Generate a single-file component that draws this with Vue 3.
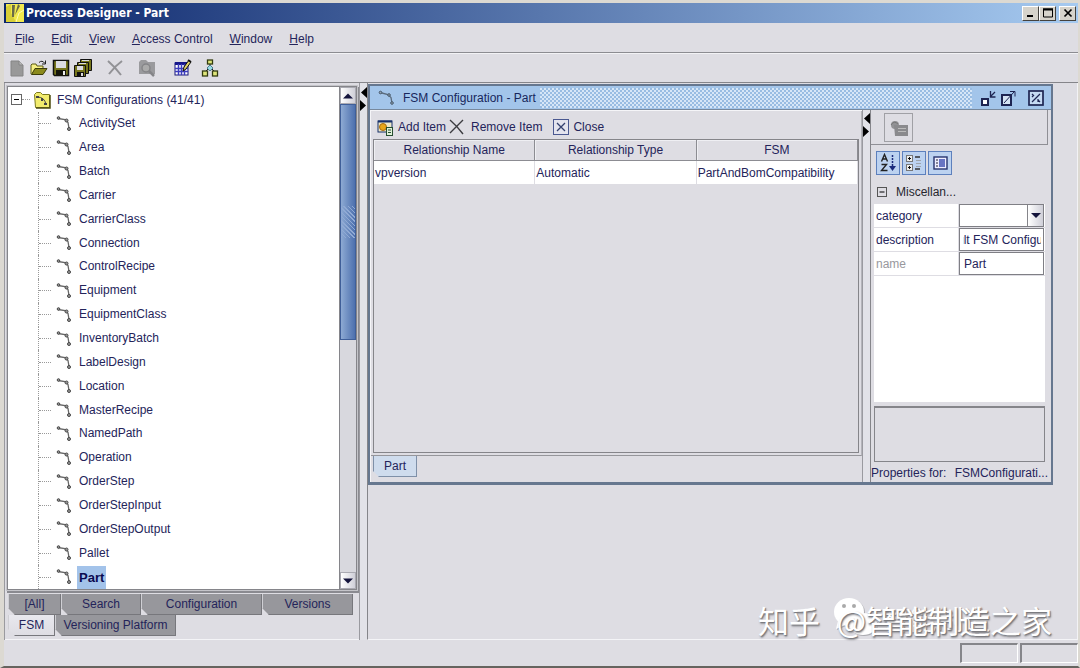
<script setup>
import { ref } from 'vue'

const menus = ['File', 'Edit', 'View', 'Access Control', 'Window', 'Help']
const items = [
  'ActivitySet', 'Area', 'Batch', 'Carrier', 'CarrierClass', 'Connection',
  'ControlRecipe', 'Equipment', 'EquipmentClass', 'InventoryBatch',
  'LabelDesign', 'Location', 'MasterRecipe', 'NamedPath', 'Operation',
  'OrderStep', 'OrderStepInput', 'OrderStepOutput', 'Pallet', 'Part',
]
const selected = ref('Part')
const category = ref('')
const description = ref('ult FSM Configuration')
const name = ref('Part')
</script>

<template>
  <div class="app">
    <header class="titlebar">
      <svg class="logo" width="18" height="18" viewBox="0 0 18 18">
        <rect width="18" height="18" fill="#f2e94e" />
        <path d="M0 18V3l5-3v9l5 9z" fill="#d8cf38" />
        <path d="M6 1h3l-1 12H6zM12 0l2 2-5 9z" fill="#6a6a48" />
        <path d="M10 18l3-9 5-3" stroke="#fffbb0" fill="none" />
      </svg>
      <h1>Process Designer - Part</h1>
      <div class="winbtns">
        <button aria-label="Minimize"><svg width="12" height="10"><path d="M2 8h6" stroke="#000" stroke-width="2" /></svg></button>
        <button aria-label="Maximize"><svg width="12" height="10"><path d="M1.500 1v8h9V1M1 1h10" stroke="#000" fill="none" /><path d="M1 1.500h10" stroke="#000" stroke-width="2" /></svg></button>
        <button class="x" aria-label="Close window"><svg width="12" height="10"><path d="M2.500 1.500l7 7M9.500 1.500l-7 7" stroke="#000" stroke-width="1.700" /></svg></button>
      </div>
    </header>

    <nav class="menubar">
      <button v-for="m in menus" :key="m"><u>{{ m[0] }}</u>{{ m.slice(1) }}</button>
    </nav>

    <div class="toolbar">
      <button aria-label="New"><svg width="18" height="18"><path d="M3 2h8l4 4v11H3z" fill="#999" stroke="#858585" /><path d="M11 2v4h4" fill="#bbb" stroke="#858585" /></svg></button>
      <button aria-label="Open">
        <svg width="18" height="18"><path d="M1 15V6l1-1h4l1 2h6v3" fill="#f5ef83" stroke="#5a5a14" /><path d="M1.500 15.500L5 9.500h12l-4 6z" fill="#8b8a1c" stroke="#3c3c08" /><path d="M9 3.500q3-3 6 1M12 5h3.500V1.500" fill="none" stroke="#222" /></svg>
      </button>
      <button aria-label="Save">
        <svg width="18" height="18"><path d="M1.500 1.500h15v15h-14l-1-1z" fill="#77761c" stroke="#111" stroke-width="1.500" /><rect x="4" y="2" width="10" height="7" fill="#dcdce2" /><rect x="4" y="11" width="10" height="6" fill="#15150a" /><rect x="11" y="12" width="2" height="4" fill="#eee" /></svg>
      </button>
      <button aria-label="Save all">
        <svg width="18" height="18"><g stroke="#111" fill="#77761c"><path d="M6.500.5h11v11h-11z" /><path d="M3.500 3.500h11v11h-11z" /><path d="M.5 6.500h11v11H.5z" /></g><path d="M8 1h7v1H8zM5 4h7v1H5zM3 7h6v4H3z" fill="#dcdce2" /><path d="M3 13h7v4H3z" fill="#111" /><path d="M7 14h2v3H7z" fill="#ddd" /></svg>
      </button>
      <button class="gap-a" aria-label="Delete"><svg width="18" height="18"><path d="M2 2q7 6 13 14M16 2Q9 7 3 15" stroke="#929296" stroke-width="2" fill="none" /></svg></button>
      <button class="gap-b" aria-label="Find">
        <svg width="18" height="18"><path d="M1 3l2-2h5l2 2h7v12H1z" fill="#9a9a9d" /><circle cx="8" cy="9" r="4" fill="#aaa" stroke="#858588" stroke-width="1.500" /><path d="M11 12l5 5" stroke="#858588" stroke-width="2.500" /></svg>
      </button>
      <button class="gap-c" aria-label="Edit table">
        <svg width="18" height="18"><rect x="1" y="4" width="13" height="12" fill="#fff" stroke="#16167a" /><rect x="1" y="3" width="13" height="3" fill="#16168a" /><path d="M1 9.500h13M1 12.500h13M4.500 5v11M7.500 5v11M10.500 5v11" stroke="#3b3bbd" stroke-width="1.500" /><path d="M9 12l1-4 5-7 2 2-5 7z" fill="#e3d36a" stroke="#111" /><path d="M14 1l3 2" stroke="#111" stroke-width="2" /></svg>
      </button>
      <button class="gap-d" aria-label="Hierarchy">
        <svg width="18" height="18"><path d="M9 5v3M9 8l-5 5M9 8l5 5" stroke="#222" /><g fill="#dfe57a" stroke="#333c10" stroke-width="1.300"><rect x="6.500" y="1" width="5" height="4" /><rect x="1.500" y="12" width="5" height="5" /><rect x="11.500" y="12" width="5" height="5" /></g><path d="M9 6l3 3-3 3-3-3z" fill="#9adbe5" stroke="#4d7f90" /></svg>
      </button>
    </div>

    <main class="main">
      <aside class="side">
        <div class="treebox">
          <ul class="tree">
            <li class="root">
              <svg class="exp" width="11" height="11"><rect x=".5" y=".5" width="10" height="10" fill="#fff" stroke="#666" /><path d="M3 5.500h5" stroke="#000" /></svg>
              <span class="dots"></span>
              <svg width="18" height="18"><path d="M1.500 3.500l2-2h4l2 2h7v13h-14z" fill="#f2ec6d" stroke="#7c7a1c" /><path d="M17 4v13H3" stroke="#4d4c10" fill="none" stroke-width="1.500" /><path d="M4 6q8 0 9 8" stroke="#444" fill="none" /><path d="M3 5h3v2H3zM8 7h2v3H8zM11 12h3v2h-3z" fill="#444" /></svg>
              <span class="label">FSM Configurations (41/41)</span>
            </li>
            <li v-for="i in items" :key="i" class="leaf" @click="selected = i">
              <span class="dots"></span>
              <svg width="16" height="16"><path d="M2 2.500l7 1 3 3 1 6" fill="none" stroke="#666" stroke-width="1.300" /><g fill="#999" stroke="#484848"><circle cx="2.500" cy="2" r="1.300" /><circle cx="10.500" cy="4.500" r="1.500" /><circle cx="13" cy="13" r="1.500" /></g></svg>
              <span class="label" :class="{ sel: selected === i }">{{ i }}</span>
            </li>
          </ul>
          <div class="scroll">
            <button aria-label="Scroll up"><svg width="10" height="6"><path d="M0 5.500L5 .5l5 5z" fill="#14143c" /></svg></button>
            <div class="thumb"><span></span></div>
            <div class="track"></div>
            <button aria-label="Scroll down"><svg width="10" height="6"><path d="M0 .5h10l-5 5z" fill="#14143c" /></svg></button>
          </div>
        </div>
        <div class="tabs">
          <div class="tabrow upper">
            <button class="t1">[All]</button><button class="t2">Search</button><button class="t3">Configuration</button><button class="t4">Versions</button>
          </div>
          <div class="tabrow lower">
            <button class="t5 on">FSM</button><button class="t6">Versioning Platform</button>
          </div>
        </div>
      </aside>

      <div class="divider">
        <svg width="7" height="24"><path d="M7 0v11L1 5.500zM0 13v11l6-5.500z" fill="#000" /></svg>
      </div>

      <section class="desktop">
        <article class="frame">
          <header class="ftitle">
            <svg width="17" height="16"><path d="M2 2.500l8 2 3 3 1 6" fill="none" stroke="#5b6b7c" stroke-width="1.300" /><g fill="#93a5b5" stroke="#46586a"><circle cx="2.500" cy="2.500" r="1.300" /><circle cx="11" cy="5" r="1.300" /><circle cx="14" cy="13" r="1.300" /></g></svg>
            <h2>FSM Configuration - Part</h2>
            <div class="bumps"></div>
            <button aria-label="Iconify"><svg width="16" height="16"><path d="M2 9h6v6H2z" fill="#fff" stroke="#1e2552" stroke-width="2" /><path d="M10 7l5-5M10.500 1v6h5" stroke="#1e2552" fill="none" stroke-width="1.300" /></svg></button>
            <button aria-label="Restore"><svg width="16" height="16"><path d="M2 5h9v10H2z" fill="#d5e3f3" stroke="#1e2552" stroke-width="2" /><path d="M4 13L14 2M10 1.500h5v5" stroke="#1e2552" fill="none" /></svg></button>
            <button class="fclose" aria-label="Close frame"><svg width="16" height="16"><rect x="1" y="1" width="14" height="14" fill="#c5daf2" stroke="#1e2552" stroke-width="1.700" /><path d="M4 4l2 2M10 10l2 2M12 4l-8 8M4 7l1-1M10 12v-3" stroke="#1e2552" stroke-width="1.200" /></svg></button>
          </header>
          <div class="fbody">
            <div class="left">
              <div class="inner">
                <div class="actions">
                  <button class="add"><svg width="17" height="17"><rect x="1" y="2" width="14" height="11" fill="#eee9c8" stroke="#17306b" /><path d="M1 2.500h14" stroke="#17306b" stroke-width="2" /><circle cx="6" cy="8" r="3.500" fill="#e6a61a" stroke="#a86b10" /><rect x="9.500" y="8.500" width="6" height="8" fill="#dff0d8" stroke="#254d30" /><path d="M11 11h3M11 13.500h3" stroke="#254d30" /></svg>Add Item</button>
                  <button class="rem"><svg width="16" height="16"><path d="M1 1q7 6 13 14M14 1Q8 7 1 14" stroke="#3c3c40" stroke-width="1.400" fill="none" /></svg>Remove Item</button>
                  <button class="clo"><svg width="16" height="16"><rect x=".5" y=".5" width="15" height="15" fill="#e4e4ee" stroke="#4a5890" /><path d="M4 4l8 8M12 4l-8 8" stroke="#34406f" stroke-width="1.300" /></svg>Close</button>
                </div>
                <div class="tablebox">
                  <table>
                    <thead><tr><th>Relationship Name</th><th>Relationship Type</th><th>FSM</th></tr></thead>
                    <tbody><tr><td>vpversion</td><td>Automatic</td><td>PartAndBomCompatibility</td></tr></tbody>
                  </table>
                </div>
              </div>
              <div class="ftabs"><button>Part</button></div>
            </div>
            <div class="divider two">
              <svg width="7" height="24"><path d="M7 0v11L1 5.500zM0 13v11l6-5.500z" fill="#000" /></svg>
            </div>
            <div class="props">
              <div class="ptop">
                <button aria-label="Properties"><svg width="20" height="18"><circle cx="6" cy="6" r="4" fill="#929295" /><path d="M5 6h14v11H6z" fill="#8a8a8d" /><path d="M9 9.500h8M9 12.500h8" stroke="#bbb" /><path d="M2 6q3-5 7-1" stroke="#777" fill="none" /></svg></button>
              </div>
              <div class="pbtns">
                <button aria-label="Sort A to Z"><svg width="20" height="20"><path d="M3.500 8.500l3-7 3 7M4.500 6h4M3.500 11.500h5l-5 6h6" stroke="#222" stroke-width="1.400" fill="none" /><path d="M14.500 2v12" stroke="#1c2c7c" stroke-width="1.500" stroke-dasharray="2 1" /><path d="M11 13h7l-3.500 5z" fill="#1c2c7c" /></svg></button>
                <button aria-label="Group"><svg width="20" height="20"><g fill="#eee" stroke="#777"><rect x="2.500" y="2.500" width="6" height="6" /><rect x="2.500" y="11.500" width="6" height="6" /></g><path d="M4 5.500h3M5.500 4v3M4 14.500h3M5.500 13v3" stroke="#111" /><path d="M11 4h5M11 16h5" stroke="#333" stroke-width="1.500" /><path d="M12 7.500h5M12 10.500h5M12 13.500h5" stroke="#9ca3ac" /></svg></button>
                <button aria-label="Details"><svg width="20" height="20"><rect x="4" y="4" width="13" height="12" fill="#eef" stroke="#27346e" stroke-width="1.400" /><path d="M6 7h2M6 10h2M6 13h2" stroke="#223" /><path d="M9 7h6M9 9h6M9 11h6M9 13h6" stroke="#3d4db0" stroke-width="1.500" /></svg></button>
              </div>
              <div class="misc">
                <svg width="10" height="10"><rect x=".5" y=".5" width="9" height="9" fill="none" stroke="#555" /><path d="M2.500 5h5" stroke="#000" /></svg>
                Miscellan...
              </div>
              <div class="plist">
                <div class="prow"><label for="cat">category</label><div class="selwrap"><select id="cat" v-model="category"><option value=""></option></select><span><svg width="10" height="5"><path d="M0 0h10L5 5z" fill="#14143c" /></svg></span></div></div>
                <div class="prow"><label for="desc">description</label><input id="desc" v-model="description" class="cut" /></div>
                <div class="prow"><label for="nm" class="dim">name</label><input id="nm" v-model="name" readonly /></div>
              </div>
              <div class="pdesc"></div>
              <footer class="pfoot"><span>Properties for:</span><span>FSMConfigurati...</span></footer>
            </div>
          </div>
        </article>
      </section>
    </main>

    <footer class="status"><span></span><span></span></footer>

    <div class="watermark">
      <span class="brand">知乎</span>
      <svg class="chat" width="46" height="42"><g fill="#fff"><ellipse cx="17" cy="16" rx="15" ry="14" /><path d="M6 25l-2 8 9-4z" /><ellipse cx="31" cy="28" rx="14" ry="11" /></g><g fill="#aaa"><circle cx="12" cy="10" r="2" /><circle cx="22" cy="10" r="2" /></g></svg>
      <span class="under">智能制造</span>
      <span class="over">@智能制造之家</span>
    </div>
  </div>
</template>

<style>
body { margin: 0; }
</style>

<style scoped>
* { box-sizing: border-box; }
.app {
  position: relative; display: flex; flex-direction: column; height: 100vh; min-height: 560px;
  background: #dedde3; border: solid #dcd9d2; border-width: 3px 2px 0 4px; border-bottom: 2px solid #66645f;
  font: 12px/16px "Liberation Sans", Arial, sans-serif; color: #24245a; overflow: hidden;
}
button { font: inherit; color: inherit; background: none; border: 0; padding: 0; margin: 0; white-space: nowrap; }
svg { display: block; flex: none; }
h1, h2, ul { margin: 0; padding: 0; font-size: 12px; }

.titlebar { display: flex; align-items: center; height: 20px; flex: none; padding: 0 2px; background: linear-gradient(90deg, #0a246a, #a6caf0); }
.titlebar h1 { margin-left: 2px; flex: 1; color: #fff; font: bold 12px/18px "DejaVu Sans Condensed", "DejaVu Sans", Tahoma, sans-serif; }
.winbtns { display: flex; }
.winbtns button { width: 17px; height: 15px; display: flex; align-items: center; justify-content: center; background: #d6d3cb; border: 1px solid; border-color: #fff #44423e #44423e #fff; }
.winbtns .x { margin-left: 3px; }

.menubar { display: flex; gap: 17px; height: 30px; flex: none; padding: 3px 11px 0; align-items: center; border-bottom: 1px solid #8c8c91; }
.toolbar { display: flex; align-items: center; gap: 4px; height: 30px; flex: none; padding: 0 4px; border-top: 1px solid #f2f2f5; border-bottom: 1px solid #85858a; }
.toolbar button { width: 18px; }
.gap-a { margin-left: 10px; }
.gap-b { margin-left: 10px; }
.gap-c { margin-left: 14px; }
.gap-d { margin-left: 5px; }

.main { flex: 1; display: flex; min-height: 0; }
.side { width: 355px; flex: none; display: flex; flex-direction: column; border-left: 1px solid #9a9a9f; }
.treebox { flex: 1; display: flex; min-height: 0; margin: 3px 2px 0 2px; border: 1px solid #85858a; box-shadow: 0 0 0 1px #c4c4c9, 1px 2px 0 1px #8a8a90; }
.tree { flex: 1; list-style: none; background: #fff; display: flex; flex-direction: column; min-height: 0; padding: 1px 0 0 3px; }
.tree li { flex: 1; display: flex; align-items: center; min-height: 0; }
.dots { width: 8px; border-top: 1px dotted #999; }
.root .dots { margin-right: 3px; }
.root .label { margin-left: 6px; }
.leaf { margin-left: 27px; border-left: 1px dotted #999; }
.leaf .dots { width: 12px; margin-right: 5px; }
.leaf .label { margin-left: 5px; padding: 0 2px; line-height: 23px; }
.label.sel { background: #a3c3ea; font-size: 13px; font-weight: bold; color: #0b0b50; }
.scroll { width: 17px; display: flex; flex-direction: column; border-left: 1px solid #85858a; background: #d8d8de; }
.scroll button { height: 17px; display: flex; align-items: center; justify-content: center; background: linear-gradient(90deg, #fff, #cfcfd8); border: 1px solid #aaaab2; flex: none; }
.thumb { flex: 235; display: flex; align-items: center; background: linear-gradient(90deg, #8daad3, #4d70ae); border: 1px solid #3f5f99; }
.thumb span { flex: 1; height: 32px; background: repeating-linear-gradient(45deg, #90aad4 0 1px, transparent 1px 3px); }
.track { flex: 234; }
.tabs { flex: none; height: 50px; padding: 4px 3px 0; border-bottom: 1px solid #f4f4f7; }
.tabrow { display: flex; height: 21px; }
.tabrow button { background: #97979c; border: solid #77777c; border-width: 0 1px 1px 0; border-left: 1px solid #cfcfd4; clip-path: polygon(0 0, 100% 0, 100% 100%, 7px 100%, 0 calc(100% - 7px)); }
.tabrow .on { background: linear-gradient(#e8e8ee, #dedde3); }
.t1 { width: 53px; }
.t2 { width: 80px; }
.t3 { width: 121px; }
.t4 { width: 91px; }
.t5 { width: 47px; }
.t6 { width: 121px; }

.divider { width: 8px; flex: none; padding: 4px 0 0 0; border-left: 1px solid #9a9aa0; background: #e2e2e8; }
.desktop { flex: 1; position: relative; border-left: 1px solid #85858a; border-bottom: 1px solid #f4f4f7; border-right: 1px solid #f2f2f5; }
.frame { position: absolute; left: 0; right: 24px; top: 1px; height: 401px; display: flex; flex-direction: column; border: 2px solid #66778f; border-bottom-width: 3px; background: #dedde3; }
.ftitle { height: 24px; flex: none; display: flex; align-items: center; padding: 0 7px 0 8px; background: #a3c5ea; border-bottom: 1px solid #77889c; }
.ftitle h2 { font-weight: normal; margin-left: 8px; color: #17275c; }
.ftitle button { margin-left: 4px; }
.ftitle .fclose { margin-left: 12px; }
.bumps { flex: 1; height: 20px; margin: 0 4px 0 4px; background: radial-gradient(circle at 1px 1px, #d6e6f7 1px, transparent 1px) 0 0 / 4px 4px, radial-gradient(circle at 1px 1px, #d6e6f7 1px, transparent 1px) 2px 2px / 4px 4px, #98bce2; }
.fbody { flex: 1; display: flex; min-height: 0; }
.left { flex: 1; min-width: 0; display: flex; flex-direction: column; border-left: 1px solid #f5f5f8; border-top: 1px solid #f5f5f8; }
.inner { flex: 1; display: flex; flex-direction: column; padding: 2px; border-bottom: 1px solid #96969b; border-right: 1px solid #b4b4ba; min-height: 0; }
.actions { display: flex; height: 26px; flex: none; align-items: center; padding: 2px 4px 0; }
.actions button { display: flex; align-items: center; gap: 4px; }
.rem { margin-left: 3px; }
.actions .rem { gap: 6px; }
.clo { margin-left: 11px; }
.tablebox { flex: 1; border: 1px solid #85858a; }
table { width: 100%; table-layout: fixed; border-collapse: separate; border-spacing: 0; }
th { font-weight: normal; height: 21px; padding: 0; border: solid #8c8c92; border-width: 0 1px 1px 0; box-shadow: inset 1px 1px 0 #efeff3; }
td { height: 23px; padding: 0 1px; background: #fff; border-right: 1px solid #dedde3; white-space: nowrap; }
.ftabs { height: 26px; flex: none; padding-left: 2px; }
.ftabs button { height: 21px; width: 44px; background: #cfdced; border: solid #7f90a8; border-width: 0 1px 1px; clip-path: polygon(0 0, 100% 0, 100% 100%, 6px 100%, 0 calc(100% - 6px)); }
.divider.two { width: 8px; padding: 3px 0 0 0; }
.props { width: 181px; flex: none; display: flex; flex-direction: column; border-left: 1px solid #85858a; }
.ptop { height: 35px; margin-right: 3px; flex: none; padding: 3px 0 0 13px; border: solid #8f8f95; border-width: 0 1px 1px 0; }
.ptop button { width: 29px; height: 29px; border: 1px solid #a0a0a5; display: flex; align-items: center; justify-content: center; }
.pbtns { display: flex; gap: 2px; padding: 6px 5px 0; flex: none; }
.pbtns button { width: 24px; height: 24px; background: #bcd2f0; border: 1px solid #5d80bd; display: flex; align-items: center; justify-content: center; }
.misc { height: 29px; flex: none; display: flex; align-items: center; gap: 9px; padding: 5px 6px 0; color: #26262e; }
.plist { flex: 1; background: #fff; margin: 0 6px 0 3px; }
.prow { display: flex; height: 24px; padding-right: 1px; border-bottom: 1px solid #dedde3; }
.prow label { width: 85px; flex: none; padding-left: 2px; line-height: 24px; border-right: 1px solid #dedde3; }
.prow .dim { color: #98989d; }
.prow input, .prow select { flex: 1; min-width: 0; width: 100%; height: 23px; border: 1px solid #7f7f85; background: #fff; font: inherit; color: inherit; padding: 0 4px; border-radius: 0; margin: 0; appearance: none; }
.prow .cut { padding: 0 2px 0 3px; text-indent: -6px; }
.selwrap { flex: 1; position: relative; display: flex; }
.selwrap span { position: absolute; right: 1px; top: 1px; bottom: 1px; width: 16px; display: flex; align-items: center; justify-content: center; background: linear-gradient(90deg, #fff, #cfcfd8); border-left: 1px solid #85858a; pointer-events: none; }
.pdesc { height: 56px; flex: none; margin: 4px 6px 0 3px; border: 1px solid #85858a; border-top-width: 2px; }
.pfoot { display: flex; justify-content: space-between; height: 20px; flex: none; padding-right: 3px; line-height: 22px; white-space: nowrap; }

.status { height: 26px; flex: none; display: flex; justify-content: flex-end; gap: 2px; padding: 3px 0; }
.status span { width: 58px; border: solid; border-width: 2px 1px 1px 2px; border-color: #85858a #fff #fff #85858a; }

.watermark { position: absolute; right: 26px; bottom: 24px; width: 294px; height: 44px; color: #fff; font: 31px/40px "Noto Sans CJK SC", sans-serif; text-shadow: 1px 1px 1px #77777c, 1px 2px 2px #99999e; white-space: nowrap; pointer-events: none; }
.watermark > * { position: absolute; }
.brand { left: 0; top: 2px; }
.chat { left: 74px; top: -2px; filter: drop-shadow(1px 1px 0 #aaaaaf); }
.under { left: 124px; top: 1px; font-size: 27px; }
.over { right: 0; top: 2px; }
</style>
